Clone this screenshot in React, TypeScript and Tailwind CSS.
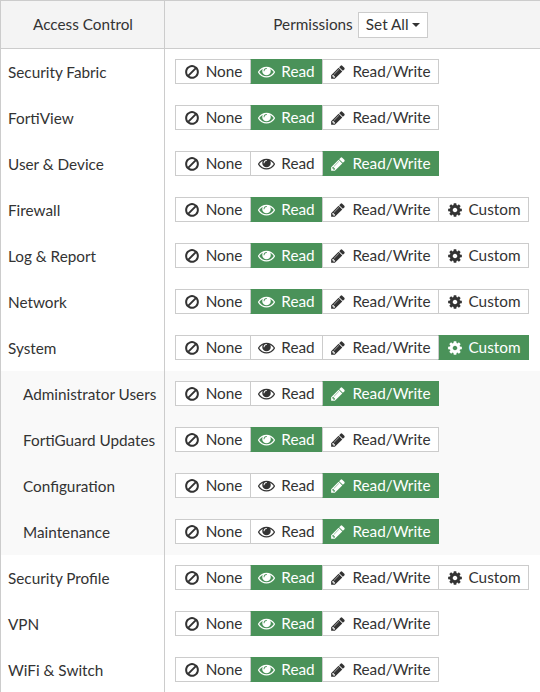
import React from "react";

type Sel = "none" | "read" | "rw" | "custom";
type Row = { label: string; sel: Sel; custom?: boolean; sub?: boolean };

const rows: Row[] = [
  { label: "Security Fabric", sel: "read" },
  { label: "FortiView", sel: "read" },
  { label: "User & Device", sel: "rw" },
  { label: "Firewall", sel: "read", custom: true },
  { label: "Log & Report", sel: "read", custom: true },
  { label: "Network", sel: "read", custom: true },
  { label: "System", sel: "custom", custom: true },
  { label: "Administrator Users", sel: "rw", sub: true },
  { label: "FortiGuard Updates", sel: "read", sub: true },
  { label: "Configuration", sel: "rw", sub: true },
  { label: "Maintenance", sel: "rw", sub: true },
  { label: "Security Profile", sel: "read", custom: true },
  { label: "VPN", sel: "read" },
  { label: "WiFi & Switch", sel: "read" },
];

function Icon({ d, size = 16 }: { d: string; size?: number }) {
  return (
    <svg viewBox="0 0 1792 1792" width={size} height={size} fill="currentColor" className="shrink-0">
      <path d={d} />
    </svg>
  );
}

const ban = "M1440 893q0-161-87-295l-754 753q137 89 297 89 111 0 211.5-43.5t173.5-116.5 116-174.5 43-212.5zm-999 299l755-754q-135-91-300-91-148 0-273 73t-198 199-73 274q0 162 89 299zm1223-299q0 157-61 300t-163.5 246-245 164-298.5 61-298.5-61-245-164-163.5-246-61-300 61-299.5 163.5-245.5 245-164 298.5-61 298.5 61 245 164 163.5 245.5 61 299.5z";
const eye = "M1664 960q-152-236-381-353 61 104 61 225 0 185-131.5 316.5t-316.5 131.5-316.5-131.5-131.5-316.5q0-121 61-225-229 117-381 353 133 205 333.5 326.5t434.5 121.5 434.5-121.5 333.5-326.5zm-720-384q0-20-14-34t-34-14q-125 0-214.5 89.5t-89.5 214.5q0 20 14 34t34 14 34-14 14-34q0-86 61-147t147-61q20 0 34-14t14-34zm848 384q0 34-20 69-140 230-376.5 368.5t-499.5 138.5-499.5-139-376.5-368q-20-35-20-69t20-69q140-229 376.5-368t499.5-139 499.5 139 376.5 368q20 35 20 69z";
const pencil = "M491 1536l91-91-235-235-91 91v107h128v128h107zm523-928q0-22-22-22-10 0-17 7l-542 542q-7 7-7 17 0 22 22 22 10 0 17-7l542-542q7-7 7-17zm-54-192l416 416-832 832h-416v-416zm683 96q0 53-37 90l-166 166-416-416 166-165q36-38 90-38 53 0 91 38l235 234q37 39 37 91z";
const cog = "M1152 896q0-106-75-181t-181-75-181 75-75 181 75 181 181 75 181-75 75-181zm512-109v222q0 12-8 23t-20 13l-185 28q-19 54-39 91 35 50 107 138 10 12 10 25t-9 23q-27 37-99 108t-94 71q-12 0-26-9l-138-108q-44 23-91 38-16 136-29 186-7 28-36 28h-222q-14 0-24.5-8.5t-11.5-21.5l-28-184q-49-16-90-37l-141 107q-10 9-25 9-14 0-25-11-126-114-165-168-7-10-7-23 0-12 8-23 15-21 51-66.5t54-70.5q-27-50-41-99l-183-27q-13-2-21-12.5t-8-23.5v-222q0-12 8-23t19-13l186-28q14-46 39-92-40-57-107-138-10-12-10-24 0-10 9-23 26-36 98.5-107.5t94.5-71.5q13 0 26 10l138 107q44-23 91-38 16-136 29-186 7-28 36-28h222q14 0 24.5 8.5t11.5 21.5l28 184q49 16 90 37l142-107q9-9 24-9 13 0 25 10 129 119 165 170 7 8 7 22 0 12-8 23-15 21-51 66.5t-54 70.5q26 50 41 98l183 28q13 2 21 12.5t8 23.5z";

function Seg({ active, width, icon, text, first }: { active: boolean; width: string; icon: React.ReactNode; text: string; first?: boolean }) {
  return (
    <div
      className={`${width} ${first ? "" : "-ml-px"} ${active ? "bg-[#4a9259] border-[#4a9259] border-l-[#cccccc] text-white" : "bg-white border-[#cccccc] text-[#333333]"} h-[25px] border flex items-center justify-center gap-[6px] text-[15.3px]`}
    >
      {icon}
      <span>{text}</span>
    </div>
  );
}

export default function App() {
  return (
    <div className="w-[540px] h-[692px] overflow-hidden bg-white text-[#333333] text-[15.3px] font-['Lato','Liberation_Sans',sans-serif] border-l border-t border-[#cccccc]">
      <div className="flex h-[48px] bg-[#f4f4f4] border-b border-[#cccccc]">
        <div className="w-[164px] border-r border-[#cccccc] flex items-center justify-center pl-[1px]">Access Control</div>
        <div className="w-[375px] pr-[4px] flex items-center justify-center gap-[5px]">
          <span>Permissions</span>
          <div className="h-[26px] w-[70px] bg-white border border-[#cccccc] flex items-center justify-center gap-[3px]">
            <span>Set All</span>
            <span className="w-0 h-0 border-x-[4px] border-x-transparent border-t-[4px] border-t-[#333333]" />
          </div>
        </div>
      </div>
      {rows.map((r) => (
        <div key={r.label} className={`flex h-[46px] ${r.sub ? "bg-[#f9f9f9]" : ""}`}>
          <div className={`w-[164px] shrink-0 border-r border-[#cccccc] flex items-center whitespace-nowrap ${r.sub ? "pl-[22px]" : "pl-[7px]"}`}>
            {r.label}
          </div>
          <div className="pl-[10px] pt-[10px] flex items-start">
            <Seg first width="w-[76px]" active={r.sel === "none"} icon={<Icon d={ban} size={16} />} text="None" />
            <Seg width="w-[73px]" active={r.sel === "read"} icon={<Icon d={eye} size={17} />} text="Read" />
            <Seg width="w-[117px]" active={r.sel === "rw"} icon={<Icon d={pencil} size={16} />} text="Read/Write" />
            {r.custom && <Seg width="w-[91px]" active={r.sel === "custom"} icon={<Icon d={cog} size={16} />} text="Custom" />}
          </div>
        </div>
      ))}
    </div>
  );
}
